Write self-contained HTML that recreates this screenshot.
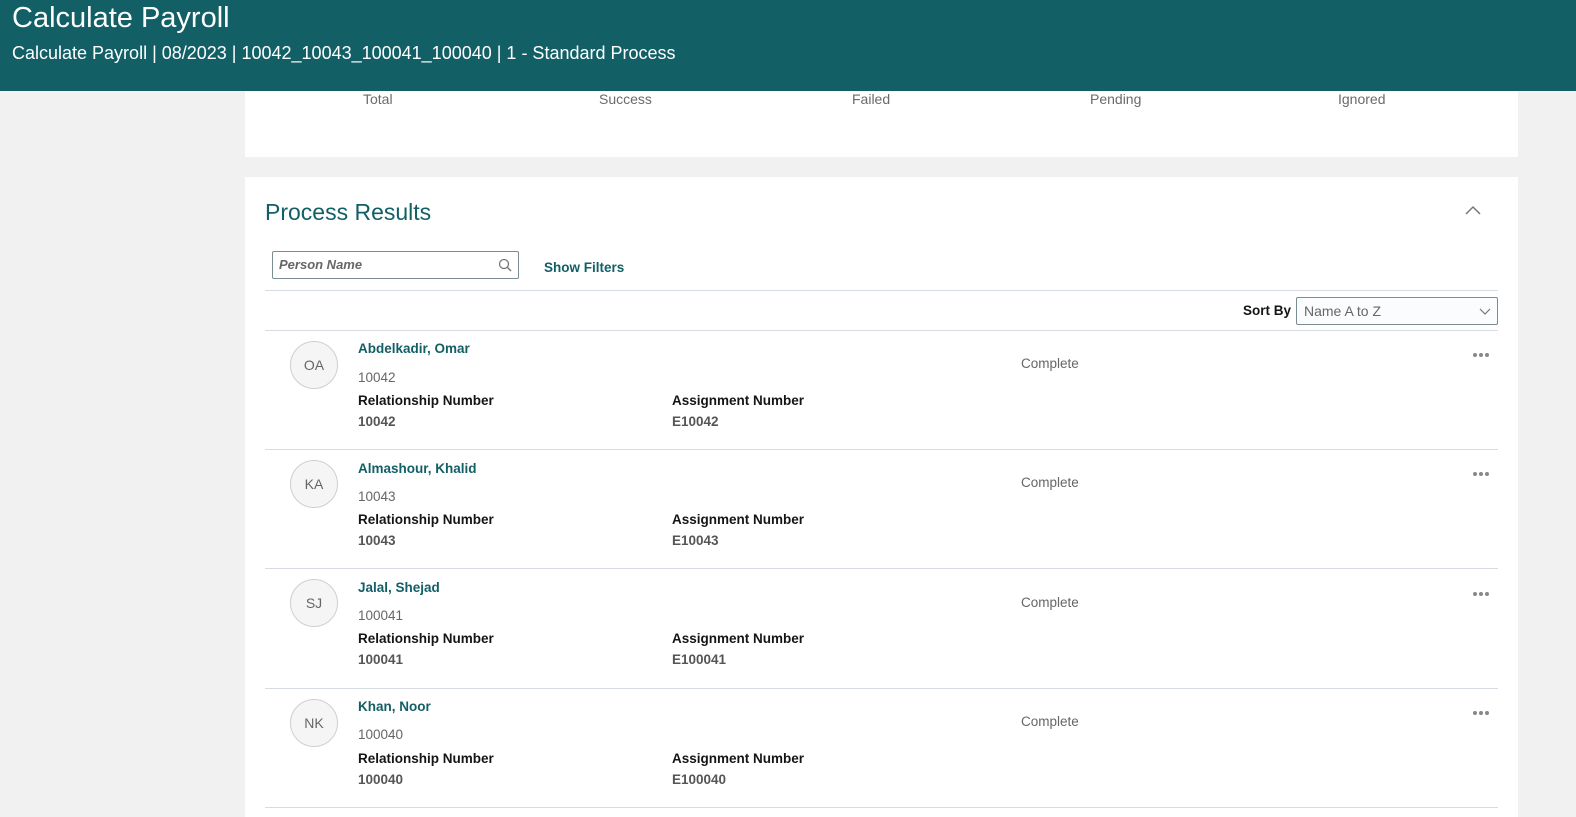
<!DOCTYPE html>
<html><head><style>
*{margin:0;padding:0;box-sizing:border-box}
body{width:1576px;height:814px;overflow:hidden;background:#f1f1f1;font-family:"Segoe UI","Liberation Sans",sans-serif;position:relative}
.hdr{position:absolute;left:0;top:0;width:1576px;height:91px;background:#125f66;color:#fff}
.hdr h1{position:absolute;left:12px;top:2px;font-size:29px;font-weight:400}
.hdr p{position:absolute;left:12px;top:43px;font-size:18px}
.card{position:absolute;background:#fff;left:245px;width:1273px}
.t{position:absolute;font-size:14px;color:#6a6a6a}
.sep{position:absolute;left:265px;width:1233px;height:1px;background:#d6dce2}
.av{position:absolute;width:48px;height:48px;border-radius:50%;border:1px solid #cfcfcf;background:#f5f5f5;color:#666;font-size:14px;text-align:center;line-height:46px}
.nm{position:absolute;color:#125f66;font-size:13.5px;font-weight:600}
.gr{position:absolute;color:#666;font-size:13.5px}
.lb{position:absolute;color:#161513;font-size:13.5px;font-weight:600}
.vl{position:absolute;color:#555;font-size:13.5px;font-weight:600}
.dots{position:absolute;width:20px;height:6px}
.dots i{position:absolute;top:0;width:4px;height:4px;border-radius:50%;background:#888}
</style></head><body>
<div class="hdr"><h1>Calculate Payroll</h1><p>Calculate Payroll | 08/2023 | 10042_10043_100041_100040 | 1 - Standard Process</p></div>
<div class="card" style="top:91px;height:66px"></div>
<div class="t" style="left:363px;top:91px">Total</div>
<div class="t" style="left:599px;top:91px">Success</div>
<div class="t" style="left:852px;top:91px">Failed</div>
<div class="t" style="left:1090px;top:91px">Pending</div>
<div class="t" style="left:1338px;top:91px">Ignored</div>
<div class="card" style="top:177px;height:640px"></div>
<div style="position:absolute;left:265px;top:199px;font-size:23px;font-weight:300;color:#125f66">Process Results</div>
<svg style="position:absolute;left:1464px;top:204px" width="18" height="12"><path d="M2 10 L9 3 L16 10" stroke="#777" stroke-width="1.5" fill="none"/></svg>
<div style="position:absolute;left:272px;top:251px;width:247px;height:28px;border:1px solid #7a8c94;border-radius:2px">
<span style="position:absolute;left:6px;top:5px;font-size:13px;font-style:italic;font-weight:600;color:#666">Person Name</span>
<svg style="position:absolute;left:225px;top:6px" width="16" height="16"><circle cx="6" cy="6" r="4.5" stroke="#777" stroke-width="1.3" fill="none"/><path d="M9.5 9.5 L13 13" stroke="#777" stroke-width="1.5"/></svg></div>
<div style="position:absolute;left:544px;top:260px;font-size:13.5px;font-weight:600;color:#125f66">Show Filters</div>
<div class="sep" style="top:290px"></div>
<div style="position:absolute;left:1243px;top:303px;font-size:13.5px;font-weight:600;color:#161513">Sort By</div>
<div style="position:absolute;left:1296px;top:297px;width:202px;height:28px;border:1px solid #7a8c94;border-radius:2px;background:#fbfcfd">
<span style="position:absolute;left:7px;top:5px;font-size:14px;color:#666">Name A to Z</span>
<svg style="position:absolute;left:182px;top:10px" width="12" height="8"><path d="M1 1 L6 6 L11 1" stroke="#777" stroke-width="1.2" fill="none"/></svg></div>
<div class="sep" style="top:330px"></div>

<div class="av" style="left:290px;top:341px">OA</div>
<div class="nm" style="left:358px;top:341px">Abdelkadir, Omar</div>
<div class="gr" style="left:358px;top:370px">10042</div>
<div class="lb" style="left:358px;top:393px">Relationship Number</div>
<div class="vl" style="left:358px;top:414px">10042</div>
<div class="lb" style="left:672px;top:393px">Assignment Number</div>
<div class="vl" style="left:672px;top:414px">E10042</div>
<div class="gr" style="left:1021px;top:356px">Complete</div>
<div class="dots" style="left:1473px;top:353px"><i style="left:0"></i><i style="left:6px"></i><i style="left:12px"></i></div>
<div class="sep" style="top:449px"></div>

<div class="av" style="left:290px;top:460px">KA</div>
<div class="nm" style="left:358px;top:461px">Almashour, Khalid</div>
<div class="gr" style="left:358px;top:489px">10043</div>
<div class="lb" style="left:358px;top:512px">Relationship Number</div>
<div class="vl" style="left:358px;top:533px">10043</div>
<div class="lb" style="left:672px;top:512px">Assignment Number</div>
<div class="vl" style="left:672px;top:533px">E10043</div>
<div class="gr" style="left:1021px;top:475px">Complete</div>
<div class="dots" style="left:1473px;top:472px"><i style="left:0"></i><i style="left:6px"></i><i style="left:12px"></i></div>
<div class="sep" style="top:568px"></div>

<div class="av" style="left:290px;top:579px">SJ</div>
<div class="nm" style="left:358px;top:580px">Jalal, Shejad</div>
<div class="gr" style="left:358px;top:608px">100041</div>
<div class="lb" style="left:358px;top:631px">Relationship Number</div>
<div class="vl" style="left:358px;top:652px">100041</div>
<div class="lb" style="left:672px;top:631px">Assignment Number</div>
<div class="vl" style="left:672px;top:652px">E100041</div>
<div class="gr" style="left:1021px;top:595px">Complete</div>
<div class="dots" style="left:1473px;top:592px"><i style="left:0"></i><i style="left:6px"></i><i style="left:12px"></i></div>
<div class="sep" style="top:688px"></div>

<div class="av" style="left:290px;top:699px">NK</div>
<div class="nm" style="left:358px;top:699px">Khan, Noor</div>
<div class="gr" style="left:358px;top:727px">100040</div>
<div class="lb" style="left:358px;top:751px">Relationship Number</div>
<div class="vl" style="left:358px;top:772px">100040</div>
<div class="lb" style="left:672px;top:751px">Assignment Number</div>
<div class="vl" style="left:672px;top:772px">E100040</div>
<div class="gr" style="left:1021px;top:714px">Complete</div>
<div class="dots" style="left:1473px;top:711px"><i style="left:0"></i><i style="left:6px"></i><i style="left:12px"></i></div>
<div class="sep" style="top:807px"></div>
</body></html>
